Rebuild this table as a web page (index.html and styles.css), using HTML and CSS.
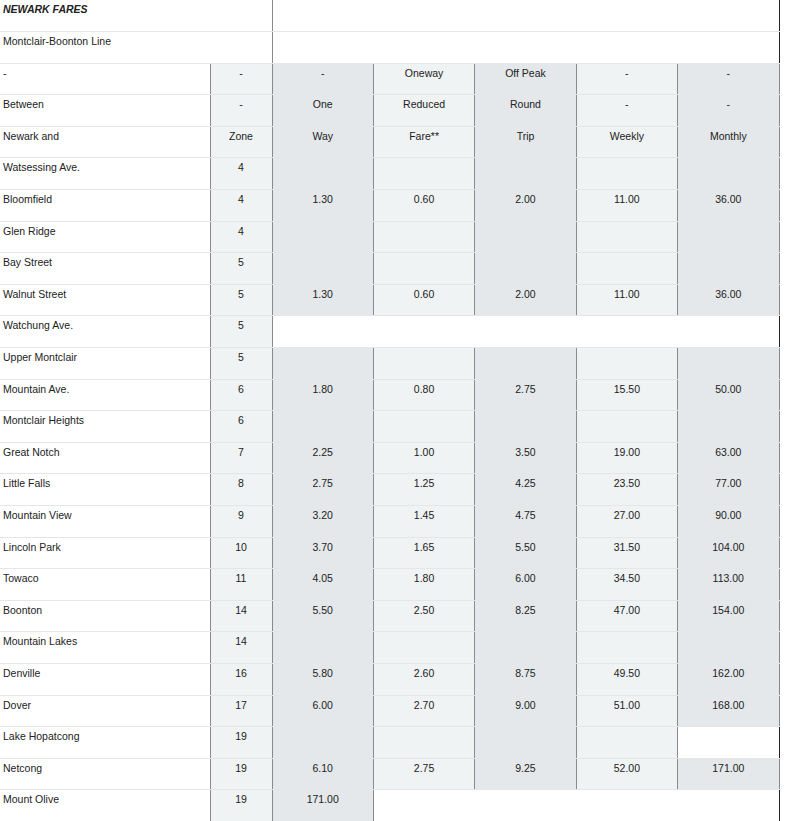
FILE: index.html
```html
<!DOCTYPE html>
<html>
<head>
<meta charset="utf-8">
<title>Newark Fares</title>
<link rel="stylesheet" href="styles.css">
</head>
<body>
<table class="fares">
<colgroup>
<col class="w-name"><col class="w-zone"><col class="w-n"><col class="w-n"><col class="w-n"><col class="w-n"><col class="w-n">
</colgroup>
<tbody>
<tr><td colspan="2" class="title">NEWARK FARES</td><td colspan="5" class="blank"></td></tr>
<tr><td colspan="2" class="name">Montclair-Boonton Line</td><td colspan="5" class="blank"></td></tr>
<tr><td class="name">-</td><td class="lt">-</td><td class="dk">-</td><td class="lt">Oneway</td><td class="dk">Off Peak</td><td class="lt">-</td><td class="dk">-</td></tr>
<tr><td class="name">Between</td><td class="lt">-</td><td class="dk">One</td><td class="lt">Reduced</td><td class="dk">Round</td><td class="lt">-</td><td class="dk">-</td></tr>
<tr><td class="name">Newark and</td><td class="lt">Zone</td><td class="dk">Way</td><td class="lt">Fare**</td><td class="dk">Trip</td><td class="lt">Weekly</td><td class="dk">Monthly</td></tr>
<tr><td class="name">Watsessing Ave.</td><td class="lt">4</td><td class="dk"></td><td class="lt"></td><td class="dk"></td><td class="lt"></td><td class="dk"></td></tr>
<tr><td class="name">Bloomfield</td><td class="lt">4</td><td class="dk">1.30</td><td class="lt">0.60</td><td class="dk">2.00</td><td class="lt">11.00</td><td class="dk">36.00</td></tr>
<tr><td class="name">Glen Ridge</td><td class="lt">4</td><td class="dk"></td><td class="lt"></td><td class="dk"></td><td class="lt"></td><td class="dk"></td></tr>
<tr><td class="name">Bay Street</td><td class="lt">5</td><td class="dk"></td><td class="lt"></td><td class="dk"></td><td class="lt"></td><td class="dk"></td></tr>
<tr><td class="name">Walnut Street</td><td class="lt">5</td><td class="dk">1.30</td><td class="lt">0.60</td><td class="dk">2.00</td><td class="lt">11.00</td><td class="dk">36.00</td></tr>
<tr><td class="name">Watchung Ave.</td><td class="lt">5</td><td colspan="5" class="blank"></td></tr>
<tr><td class="name">Upper Montclair</td><td class="lt">5</td><td class="dk"></td><td class="lt"></td><td class="dk"></td><td class="lt"></td><td class="dk"></td></tr>
<tr><td class="name">Mountain Ave.</td><td class="lt">6</td><td class="dk">1.80</td><td class="lt">0.80</td><td class="dk">2.75</td><td class="lt">15.50</td><td class="dk">50.00</td></tr>
<tr><td class="name">Montclair Heights</td><td class="lt">6</td><td class="dk"></td><td class="lt"></td><td class="dk"></td><td class="lt"></td><td class="dk"></td></tr>
<tr><td class="name">Great Notch</td><td class="lt">7</td><td class="dk">2.25</td><td class="lt">1.00</td><td class="dk">3.50</td><td class="lt">19.00</td><td class="dk">63.00</td></tr>
<tr><td class="name">Little Falls</td><td class="lt">8</td><td class="dk">2.75</td><td class="lt">1.25</td><td class="dk">4.25</td><td class="lt">23.50</td><td class="dk">77.00</td></tr>
<tr><td class="name">Mountain View</td><td class="lt">9</td><td class="dk">3.20</td><td class="lt">1.45</td><td class="dk">4.75</td><td class="lt">27.00</td><td class="dk">90.00</td></tr>
<tr><td class="name">Lincoln Park</td><td class="lt">10</td><td class="dk">3.70</td><td class="lt">1.65</td><td class="dk">5.50</td><td class="lt">31.50</td><td class="dk">104.00</td></tr>
<tr><td class="name">Towaco</td><td class="lt">11</td><td class="dk">4.05</td><td class="lt">1.80</td><td class="dk">6.00</td><td class="lt">34.50</td><td class="dk">113.00</td></tr>
<tr><td class="name">Boonton</td><td class="lt">14</td><td class="dk">5.50</td><td class="lt">2.50</td><td class="dk">8.25</td><td class="lt">47.00</td><td class="dk">154.00</td></tr>
<tr><td class="name">Mountain Lakes</td><td class="lt">14</td><td class="dk"></td><td class="lt"></td><td class="dk"></td><td class="lt"></td><td class="dk"></td></tr>
<tr><td class="name">Denville</td><td class="lt">16</td><td class="dk">5.80</td><td class="lt">2.60</td><td class="dk">8.75</td><td class="lt">49.50</td><td class="dk">162.00</td></tr>
<tr><td class="name">Dover</td><td class="lt">17</td><td class="dk">6.00</td><td class="lt">2.70</td><td class="dk">9.00</td><td class="lt">51.00</td><td class="dk">168.00</td></tr>
<tr><td class="name">Lake Hopatcong</td><td class="lt">19</td><td class="dk"></td><td class="lt"></td><td class="dk"></td><td class="lt"></td><td class="blank"></td></tr>
<tr><td class="name">Netcong</td><td class="lt">19</td><td class="dk">6.10</td><td class="lt">2.75</td><td class="dk">9.25</td><td class="lt">52.00</td><td class="dk">171.00</td></tr>
<tr><td class="name">Mount Olive</td><td class="lt">19</td><td class="dk">171.00</td><td colspan="4" class="blank"></td></tr>
</tbody>
</table>
</body>
</html>
```
FILE: styles.css
```css
html, body {
  margin: 0;
  padding: 0;
  background: #ffffff;
}

.fares {
  border-collapse: collapse;
  table-layout: fixed;
  width: 779px;
  font-family: "Liberation Sans", Arial, sans-serif;
  font-size: 10.5px;
  color: #222222;
}

.w-name { width: 210px; }
.w-zone { width: 62px; }
.w-n { width: 101.4px; }

.fares tr {
  height: 31.6px;
}

.fares td {
  padding: 3px 3px 0 3px;
  vertical-align: top;
  text-align: center;
  border-bottom: 1px solid #e4e6e7;
  border-right: 1px solid #8a8a8a;
  line-height: 13px;
}

.fares td.name,
.fares td.title {
  text-align: left;
  background: #ffffff;
}

.fares td.title {
  font-weight: bold;
  font-style: italic;
}

.fares td.lt {
  background: #eff3f4;
}

.fares td.dk {
  background: #e4e8ea;
}

.fares td.blank {
  background: #ffffff;
  border-right: 1px solid #222222;
}
```
